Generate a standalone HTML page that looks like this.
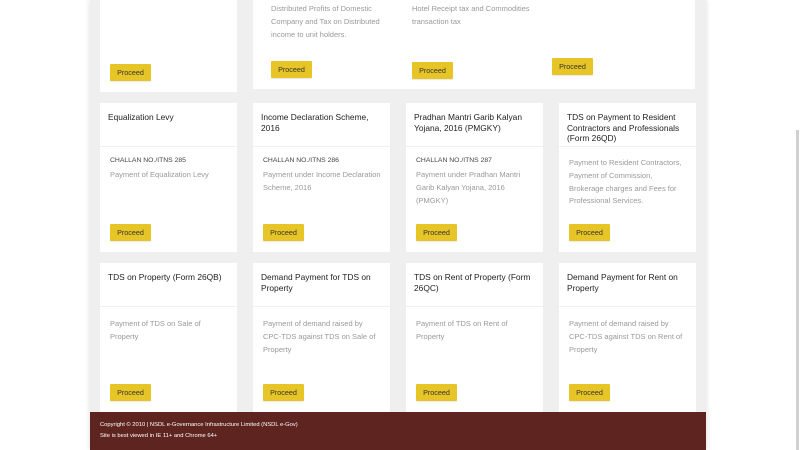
<!DOCTYPE html>
<html><head><style>
*{margin:0;padding:0;box-sizing:border-box}
body{width:800px;height:450px;overflow:hidden;background:#fff;font-family:"Liberation Sans",Arial,sans-serif;position:relative}
.wrap{position:absolute;left:90px;top:0;width:616px;height:450px;background:#efefef;box-shadow:0 0 5px rgba(0,0,0,.15)}
.card{position:absolute;background:#fff}
.t{position:absolute;left:8px;top:9px;right:6px;font-size:8.4px;line-height:10.5px;color:#222}
.hr{position:absolute;left:0;right:0;height:1px;background:#f0f0f0}
.c{position:absolute;left:10px;font-size:6.8px;color:#444}
.d{position:absolute;left:10px;width:118px;font-size:7.5px;line-height:12.8px;color:#999}
.b{position:absolute;width:41px;height:17px;background:#e8c526;border-radius:1px;font-size:7.2px;color:#333;text-align:center;line-height:17px;box-shadow:0 1px 1px rgba(0,0,0,.1)}
.f{position:absolute;left:90px;top:412px;width:616px;height:38px;background:#5e2420;color:#fff;font-size:5.8px}
.sb{position:absolute;left:796px;top:130px;width:3px;height:320px;background:#d0d0d0}
</style></head><body>
<div class="wrap"></div>
<div class="card" style="left:100px;top:0;width:137px;height:92px"><div class="b" style="left:10px;top:64px">Proceed</div></div>
<div class="card" style="left:253px;top:0;width:442px;height:89px">
<div class="d" style="left:18px;top:3px">Distributed Profits of Domestic Company and Tax on Distributed income to unit holders.</div>
<div class="d" style="left:159px;width:125px;top:-10px">&nbsp;<br>Hotel Receipt tax and Commodities transaction tax</div>
<div class="b" style="left:18px;top:61px">Proceed</div>
<div class="b" style="left:159px;top:62px">Proceed</div>
<div class="b" style="left:299px;top:58px">Proceed</div>
</div>

<div class="card" style="left:100px;top:103px;width:137px;height:149px"><div class="t">Equalization Levy</div><div class="hr" style="top:43px"></div><div class="c" style="top:54px">CHALLAN NO./ITNS 285</div><div class="d" style="top:66px">Payment of Equalization Levy</div><div class="b" style="left:10px;top:121px">Proceed</div></div>
<div class="card" style="left:253px;top:103px;width:137px;height:149px"><div class="t">Income Declaration Scheme, 2016</div><div class="hr" style="top:43px"></div><div class="c" style="top:54px">CHALLAN NO./ITNS 286</div><div class="d" style="top:66px">Payment under Income Declaration Scheme, 2016</div><div class="b" style="left:10px;top:121px">Proceed</div></div>
<div class="card" style="left:406px;top:103px;width:137px;height:149px"><div class="t">Pradhan Mantri Garib Kalyan Yojana, 2016 (PMGKY)</div><div class="hr" style="top:43px"></div><div class="c" style="top:54px">CHALLAN NO./ITNS 287</div><div class="d" style="top:66px">Payment under Pradhan Mantri Garib Kalyan Yojana, 2016 (PMGKY)</div><div class="b" style="left:10px;top:121px">Proceed</div></div>
<div class="card" style="left:559px;top:103px;width:137px;height:149px"><div class="t">TDS on Payment to Resident Contractors and Professionals (Form 26QD)</div><div class="hr" style="top:43px"></div><div class="d" style="top:54px">Payment to Resident Contractors, Payment of Commission, Brokerage charges and Fees for Professional Services.</div><div class="b" style="left:10px;top:121px">Proceed</div></div>

<div class="card" style="left:100px;top:263px;width:137px;height:149px"><div class="t">TDS on Property (Form 26QB)</div><div class="hr" style="top:43px"></div><div class="d" style="top:55px">Payment of TDS on Sale of Property</div><div class="b" style="left:10px;top:121px">Proceed</div></div>
<div class="card" style="left:253px;top:263px;width:137px;height:149px"><div class="t">Demand Payment for TDS on Property</div><div class="hr" style="top:43px"></div><div class="d" style="top:55px">Payment of demand raised by CPC-TDS against TDS on Sale of Property</div><div class="b" style="left:10px;top:121px">Proceed</div></div>
<div class="card" style="left:406px;top:263px;width:137px;height:149px"><div class="t">TDS on Rent of Property (Form 26QC)</div><div class="hr" style="top:43px"></div><div class="d" style="top:55px">Payment of TDS on Rent of Property</div><div class="b" style="left:10px;top:121px">Proceed</div></div>
<div class="card" style="left:559px;top:263px;width:137px;height:149px"><div class="t">Demand Payment for Rent on Property</div><div class="hr" style="top:43px"></div><div class="d" style="top:55px">Payment of demand raised by CPC-TDS against TDS on Rent of Property</div><div class="b" style="left:10px;top:121px">Proceed</div></div>

<div class="f"><div style="position:absolute;left:10px;top:10px">Copyright © 2010 | NSDL e-Governance Infrastructure Limited (NSDL e-Gov)</div><div style="position:absolute;left:10px;top:21px">Site is best viewed in IE 11+ and Chrome 64+</div></div>
<div class="sb"></div>
</body></html>
